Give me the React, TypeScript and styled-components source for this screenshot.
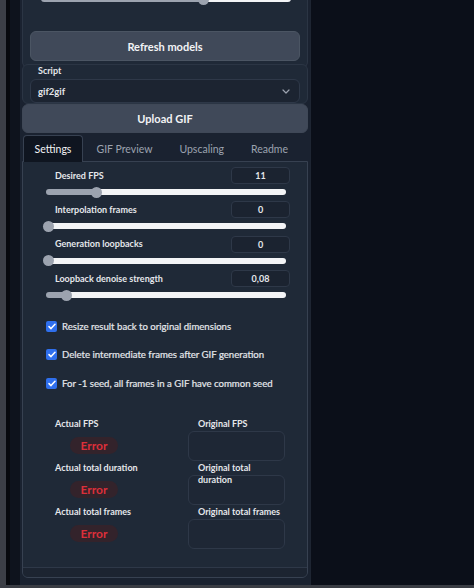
import React from "react";
import styled, { createGlobalStyle } from "styled-components";

const Global = createGlobalStyle`
  html, body { margin: 0; padding: 0; background: #0b0f19; }
  body { font-family: Lato, "Liberation Sans", sans-serif; }
  * { box-sizing: border-box; }
`;

const Page = styled.div`
  width: 474px;
  height: 588px;
  display: flex;
  flex-direction: column;
  background: #0b0f19;
  overflow: hidden;
`;

const Main = styled.div`
  flex: 1;
  display: flex;
  min-height: 0;
`;

const Footer = styled.div`
  height: 3px;
  background: #3a3d44;
`;

const Gutter = styled.div`
  width: 10px;
  background: #3c3f46;
  border-right: 4px solid #07090d;
  flex-shrink: 0;
`;

const Gap = styled.div`
  width: 10px;
  flex-shrink: 0;
  background: #0e131d;
`;

const Column = styled.div`
  width: 290px;
  flex-shrink: 0;
  display: flex;
  flex-direction: column;
  background: #1a2230;
  padding: 0 2px 7px 2px;
  color: #e5e7eb;
`;

const Block = styled.div`
  background: #1f2937;
  border: 1px solid #2b3544;
  border-radius: 0 0 6px 6px;
  display: flex;
  flex-direction: column;
`;

const TopBlock = styled(Block)`
  border-top: none;
  padding: 0 7px 0 7px;
  height: 68px;
`;

const ScriptBlock = styled(Block)`
  border-radius: 6px;
  margin-top: -4px;
  padding: 0 7px 0 7px;
  height: 40px;
`;

const SliderTrack = styled.div<{ $pct: number }>`
  position: relative;
  height: 6px;
  border-radius: 3px;
  background: linear-gradient(
    to right,
    #9ca3af 0%,
    #9ca3af ${(p) => p.$pct}%,
    #f3f4f6 ${(p) => p.$pct}%,
    #f3f4f6 100%
  );
`;

const Thumb = styled.div`
  position: absolute;
  top: 50%;
  width: 11px;
  height: 11px;
  margin-left: -5.5px;
  margin-top: -5.5px;
  border-radius: 50%;
  background: #9ca3af;
`;

const TopSlider = styled.div`
  margin: -4px 9px 0 11px;
`;

const BigButton = styled.button<{ $wide?: boolean }>`
  display: flex;
  align-items: center;
  justify-content: center;
  border: 1px solid ${(p) => (p.$wide ? "#3f4857" : "#4b5563")};
  border-radius: 6px;
  background: #404959;
  color: #f3f4f6;
  font-family: Lato, "Liberation Sans", sans-serif;
  font-weight: 700;
  font-size: 11px;
  padding: 0;
  width: 100%;
  height: ${(p) => (p.$wide ? 29 : 30)}px;
`;

const RefreshButton = styled(BigButton)`
  margin-top: 29px;
`;

const SmallLabel = styled.span`
  font-size: 9px;
  font-weight: 700;
  color: #e5e7eb;
  line-height: 12px;
`;

const ScriptLabel = styled(SmallLabel)`
  margin: 0 0 2px 8px;
  height: 12px;
`;

const Select = styled.div`
  height: 24px;
  border: 1px solid #2e3848;
  border-radius: 6px;
  background: #1c2431;
  display: flex;
  align-items: center;
  justify-content: space-between;
  padding: 0 9px 0 7px;
  font-size: 9.5px;
  font-weight: 700;
  color: #e5e7eb;
`;

const UploadButton = styled(BigButton)`
  margin-top: 0;
`;

const TabBar = styled.div`
  display: flex;
  margin-top: 2px;
  height: 26px;
`;

const Tab = styled.div<{ $active?: boolean }>`
  display: flex;
  align-items: center;
  justify-content: center;
  padding: 0 ${(p) => (p.$active ? 10 : 12.5)}px;
  font-size: 10.5px;
  font-weight: 400;
  color: ${(p) => (p.$active ? "#f3f4f6" : "#9ca3af")};
  background: ${(p) => (p.$active ? "#0f1520" : "transparent")};
  border: 1px solid ${(p) => (p.$active ? "#374151" : "transparent")};
  border-bottom: none;
  border-radius: 4px 4px 0 0;
  margin-left: ${(p) => (p.$active ? 1 : 0)}px;
  width: ${(p) => (p.$active ? "60px" : "auto")};
  position: relative;
  z-index: 1;
  margin-bottom: -1px;
`;

const TabPanel = styled.div`
  flex: 1;
  border: 1px solid #374151;
  border-radius: 0 0 6px 6px;
  background: #1f2937;
  display: flex;
  flex-direction: column;
  padding: 5px 0 0 0;
  overflow: hidden;
`;

const SliderGroup = styled.div`
  display: flex;
  flex-direction: column;
  gap: 3px;
  padding: 0 21px 0 23px;
  margin-bottom: 4.4px;
`;

const SliderHead = styled.div`
  display: flex;
  align-items: center;
  justify-content: space-between;
  height: 17px;
  margin-right: -4px;
`;

const SliderLabel = styled(SmallLabel)`
  margin-left: 9px;
`;

const NumInput = styled.div`
  width: 59px;
  height: 17px;
  border: 1px solid #2e3848;
  border-radius: 4px;
  background: #1b2330;
  display: flex;
  align-items: center;
  justify-content: center;
  font-size: 9px;
  font-weight: 700;
  color: #e5e7eb;
`;

const TrackWrap = styled.div`
  height: 10px;
  display: flex;
  align-items: center;
`;

const Track = styled(SliderTrack)`
  flex: 1;
  height: 6px;
`;

const Checks = styled.div`
  display: flex;
  flex-direction: column;
  gap: 11.5px;
  padding: 13px 0 0 23px;
`;

const CheckRow = styled.div`
  display: flex;
  align-items: center;
  gap: 5px;
  height: 17px;
`;

const Box = styled.div`
  width: 11px;
  height: 11px;
  border-radius: 2px;
  background: #2f6fed;
  display: flex;
  align-items: center;
  justify-content: center;
`;

const CheckText = styled.span`
  font-size: 9.6px;
  font-weight: 400;
  color: #e5e7eb;
  -webkit-text-stroke: 0.2px #e5e7eb;
`;

const Stats = styled.div`
  display: grid;
  grid-template-columns: 133px 97px;
  grid-auto-rows: 44px;
  margin: 26px 0 0 32px;
`;

const Cell = styled.div`
  display: flex;
  flex-direction: column;
  align-items: flex-start;
`;

const StatLabel = styled(SmallLabel)<{ $indent?: number }>`
  height: 12px;
  margin-left: ${(p) => p.$indent ?? 0}px;
  position: relative;
  z-index: 1;
  white-space: nowrap;
`;

const ErrorBadge = styled.div`
  margin: 7px 0 0 15px;
  width: 48px;
  height: 17px;
  border-radius: 9px;
  background: #33232b;
  color: #dc2f3a;
  font-size: 12px;
  font-weight: 700;
  display: flex;
  align-items: center;
  justify-content: center;
`;

const OutBox = styled.div`
  margin-top: 1px;
  width: 97px;
  height: 30px;
  border: 1px solid #2e3848;
  border-radius: 6px;
  background: #1e2735;
`;

const PanelBottom = styled.div`
  margin-top: auto;
  height: 10px;
  border-top: 1px solid #2e3848;
  background: #1c2431;
`;

const Rest = styled.div`
  flex: 1;
  background: #0b0f19;
  border-left: 1px solid #1e2532;
`;

const sliders = [
  { label: "Desired FPS", value: "11", pct: 21 },
  { label: "Interpolation frames", value: "0", pct: 1 },
  { label: "Generation loopbacks", value: "0", pct: 1 },
  { label: "Loopback denoise strength", value: "0,08", pct: 8.5 },
];

const checks = [
  "Resize result back to original dimensions",
  "Delete intermediate frames after GIF generation",
  "For -1 seed, all frames in a GIF have common seed",
];

const stats: { left: string; right: React.ReactNode }[] = [
  { left: "Actual FPS", right: "Original FPS" },
  {
    left: "Actual total duration",
    right: (
      <>
        Original total
        <br />
        duration
      </>
    ),
  },
  { left: "Actual total frames", right: "Original total frames" },
];

const Chevron = () => (
  <svg width="8" height="5" viewBox="0 0 8 5" fill="none">
    <path d="M1 1l3 3 3-3" stroke="#9ca3af" strokeWidth="1.2" strokeLinecap="round" strokeLinejoin="round" />
  </svg>
);

const Tick = () => (
  <svg width="8" height="7" viewBox="0 0 8 7" fill="none">
    <path d="M1 3.6l2 2L7 1.2" stroke="#fff" strokeWidth="1.5" strokeLinecap="round" strokeLinejoin="round" />
  </svg>
);

export default function App() {
  return (
    <Page>
      <Global />
      <Main>
        <Gutter />
        <Gap />
        <Column>
          <TopBlock>
            <TopSlider>
              <SliderTrack $pct={65}>
                <Thumb style={{ left: "65%" }} />
              </SliderTrack>
            </TopSlider>
            <RefreshButton>Refresh models</RefreshButton>
          </TopBlock>
          <ScriptBlock>
            <ScriptLabel>Script</ScriptLabel>
            <Select>
              <span>gif2gif</span>
              <Chevron />
            </Select>
          </ScriptBlock>
          <UploadButton $wide>Upload GIF</UploadButton>
          <TabBar>
            <Tab $active>Settings</Tab>
            <Tab>GIF Preview</Tab>
            <Tab>Upscaling</Tab>
            <Tab>Readme</Tab>
          </TabBar>
          <TabPanel>
            {sliders.map((s) => (
              <SliderGroup key={s.label}>
                <SliderHead>
                  <SliderLabel>{s.label}</SliderLabel>
                  <NumInput>{s.value}</NumInput>
                </SliderHead>
                <TrackWrap>
                  <Track $pct={s.pct}>
                    <Thumb style={{ left: `${s.pct}%` }} />
                  </Track>
                </TrackWrap>
              </SliderGroup>
            ))}
            <Checks>
              {checks.map((c) => (
                <CheckRow key={c}>
                  <Box>
                    <Tick />
                  </Box>
                  <CheckText>{c}</CheckText>
                </CheckRow>
              ))}
            </Checks>
            <Stats>
              {stats.map((s, i) => (
                <React.Fragment key={i}>
                  <Cell>
                    <StatLabel>{s.left}</StatLabel>
                    <ErrorBadge>Error</ErrorBadge>
                  </Cell>
                  <Cell>
                    <StatLabel $indent={10}>{s.right}</StatLabel>
                    <OutBox />
                  </Cell>
                </React.Fragment>
              ))}
            </Stats>
            <PanelBottom />
          </TabPanel>
        </Column>
        <Rest />
      </Main>
      <Footer />
    </Page>
  );
}
